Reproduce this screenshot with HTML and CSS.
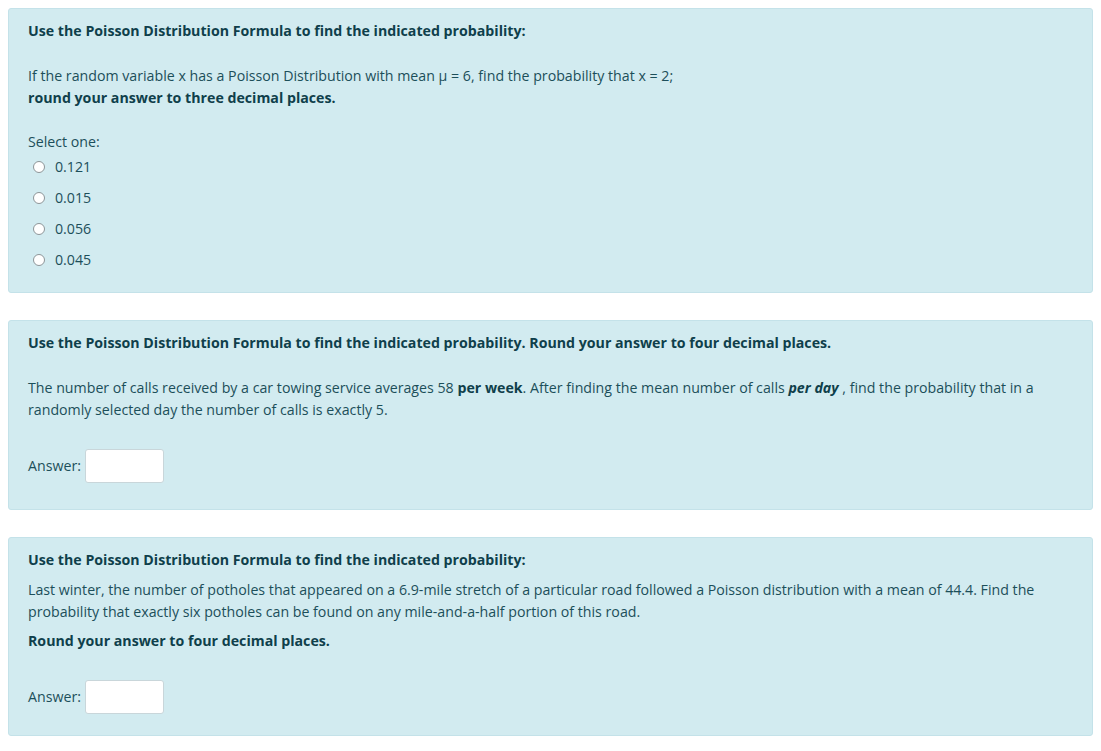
FILE: index.html
```html
<!DOCTYPE html>
<html>
<head>
<meta charset="utf-8">
<link rel="stylesheet" href="styles.css">
</head>
<body>
<div class="card">
  <p class="title">Use the Poisson Distribution Formula to find the indicated probability:</p>
  <p class="para gap-lg">If the random variable x has a Poisson Distribution with mean μ = 6, find the probability that x = 2;<br><strong>round your answer to three decimal places.</strong></p>
  <div class="select">Select one:</div>
  <div class="options">
    <label class="opt"><span class="radio"></span>0.121</label>
    <label class="opt"><span class="radio"></span>0.015</label>
    <label class="opt"><span class="radio"></span>0.056</label>
    <label class="opt"><span class="radio"></span>0.045</label>
  </div>
</div>
<div class="card">
  <p class="title">Use the Poisson Distribution Formula to find the indicated probability. Round your answer to four decimal places.</p>
  <p class="para gap-lg">The number of calls received by a car towing service averages 58 <strong>per week</strong>. After finding the mean number of calls <strong><em>per day</em></strong> , find the probability that in a randomly selected day the number of calls is exactly 5.</p>
  <div class="answer answer-wide"><span>Answer:</span><span class="input"></span></div>
</div>
<div class="card">
  <p class="title">Use the Poisson Distribution Formula to find the indicated probability:</p>
  <p class="para gap-sm">Last winter, the number of potholes that appeared on a 6.9-mile stretch of a particular road followed a Poisson distribution with a mean of 44.4. Find the probability that exactly six potholes can be found on any mile-and-a-half portion of this road.</p>
  <p class="para bold gap-xs">Round your answer to four decimal places.</p>
  <div class="answer"><span>Answer:</span><span class="input"></span></div>
</div>
</body>
</html>
```
FILE: styles.css
```css
body {
  margin: 8px;
  background: #ffffff;
  font-family: "Open Sans", "Noto Sans", sans-serif;
  font-size: 14.2px;
  line-height: 22px;
  color: #1c4f5a;
}
.card {
  background: #d2ebf0;
  border: 1px solid #c4e2e9;
  border-radius: 3px;
  padding: 11px 19px 21px;
  margin-bottom: 27px;
}
.card p { margin: 0; }
.title {
  font-weight: 700;
  color: #0f3f4b;
}
.para strong, .bold { font-weight: 700; color: #0f3f4b; }
.gap-lg { margin-top: 23px !important; }
.gap-sm { margin-top: 8px !important; }
.gap-xs { margin-top: 7px !important; }
.select { margin-top: 22px; }
.options { display: flex; flex-direction: column; gap: 9px; margin-top: 3px; }
.opt { display: flex; align-items: center; height: 22px; padding-left: 5px; }
.radio {
  width: 10px; height: 10px;
  border: 1px solid #8d9598;
  border-radius: 50%;
  background: #fff;
  margin-right: 10px;
}
.answer {
  display: flex; align-items: center; gap: 4px;
  margin-top: 28px;
}
.answer-wide { margin-bottom: 5px; }
.input {
  width: 77px; height: 32px;
  background: #fff;
  border: 1px solid #c9d6da;
  border-radius: 3px;
}
```
